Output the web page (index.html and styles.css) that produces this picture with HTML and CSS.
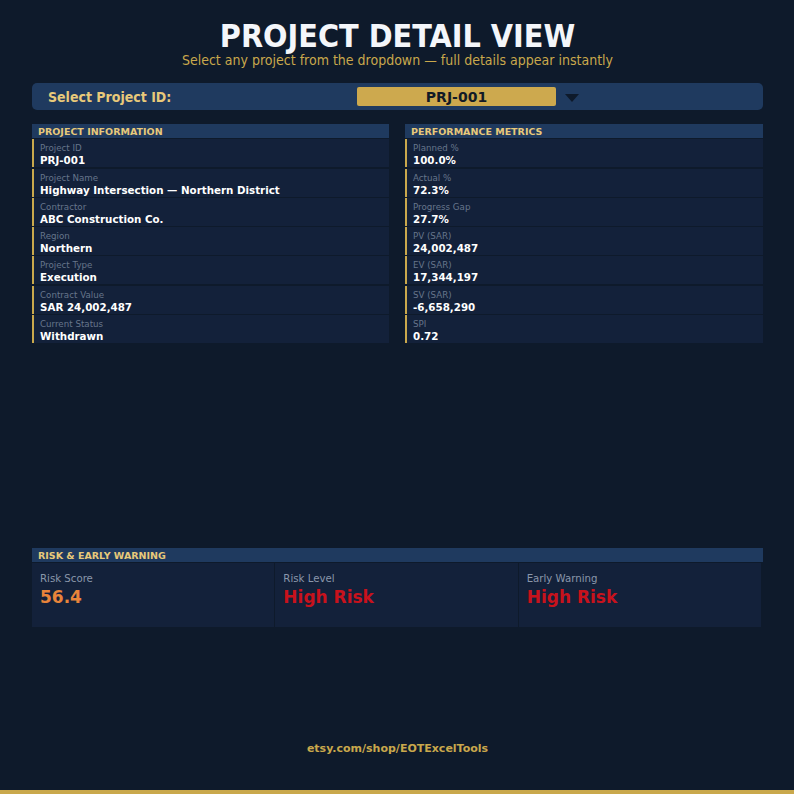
FILE: index.html
```html
<!DOCTYPE html>
<html lang="en">
<head>
    <meta charset="UTF-8">
    <meta name="viewport" content="width=device-width, initial-scale=1.0">
    <title>Project Detail View</title>
    <link rel="stylesheet" href="styles.css">
</head>
<body>
    <div class="page">
        <header class="head">
            <h1>PROJECT DETAIL VIEW</h1>
            <p class="sub">Select any project from the dropdown — full details appear instantly</p>
        </header>

        <!-- project picker -->
        <div class="picker">
            <span class="picker-label">Select Project ID:</span>
            <div class="picker-box">PRJ-001</div>
            <span class="picker-arrow"></span>
        </div>

        <div class="panels">
            <section class="panel">
                <div class="panel-title">PROJECT INFORMATION</div>
                <div class="row"><span class="lbl">Project ID</span><span class="val">PRJ-001</span></div>
                <div class="row"><span class="lbl">Project Name</span><span class="val">Highway Intersection — Northern District</span></div>
                <div class="row"><span class="lbl">Contractor</span><span class="val">ABC Construction Co.</span></div>
                <div class="row"><span class="lbl">Region</span><span class="val">Northern</span></div>
                <div class="row"><span class="lbl">Project Type</span><span class="val">Execution</span></div>
                <div class="row"><span class="lbl">Contract Value</span><span class="val">SAR 24,002,487</span></div>
                <div class="row"><span class="lbl">Current Status</span><span class="val">Withdrawn</span></div>
            </section>
            <section class="panel">
                <div class="panel-title">PERFORMANCE METRICS</div>
                <div class="row"><span class="lbl">Planned %</span><span class="val">100.0%</span></div>
                <div class="row"><span class="lbl">Actual %</span><span class="val">72.3%</span></div>
                <div class="row"><span class="lbl">Progress Gap</span><span class="val">27.7%</span></div>
                <div class="row"><span class="lbl">PV (SAR)</span><span class="val">24,002,487</span></div>
                <div class="row"><span class="lbl">EV (SAR)</span><span class="val">17,344,197</span></div>
                <div class="row"><span class="lbl">SV (SAR)</span><span class="val">-6,658,290</span></div>
                <div class="row"><span class="lbl">SPI</span><span class="val">0.72</span></div>
            </section>
        </div>

        <section class="risk">
            <div class="panel-title">RISK &amp; EARLY WARNING</div>
            <div class="risk-cells">
                <div class="cell"><span class="cell-lbl">Risk Score</span><span class="cell-val score">56.4</span></div>
                <div class="cell"><span class="cell-lbl">Risk Level</span><span class="cell-val danger">High Risk</span></div>
                <div class="cell"><span class="cell-lbl">Early Warning</span><span class="cell-val danger">High Risk</span></div>
            </div>
        </section>

        <footer class="foot">etsy.com/shop/EOTExcelTools</footer>
    </div>
</body>
</html>
```

FILE: styles.css
```css
html, body {
    margin: 0;
    height: 100%;
}

body {
    font-family: 'DejaVu Sans', sans-serif;
    background: #0e1a2b;
    color: #fff;
}

.page {
    height: 794px;
    box-sizing: border-box;
    padding: 21px 31px 0 32px;
    border-bottom: 4px solid #c9a84c;
    display: flex;
    flex-direction: column;
}

.head {
    text-align: center;
}

.head h1 {
    margin: 0;
    font-family: 'DejaVu Sans Condensed', 'DejaVu Sans', sans-serif;
    font-size: 32px;
    font-weight: bold;
    line-height: 31px;
    color: #f4f6fa;
}

.sub {
    margin: 0;
    font-family: 'DejaVu Sans Condensed', 'DejaVu Sans', sans-serif;
    font-size: 14px;
    line-height: 16px;
    color: #c9a84c;
}

.picker {
    margin-top: 15px;
    height: 27px;
    background: #1f3a5f;
    border-radius: 5px;
    display: flex;
    align-items: center;
    padding-left: 16px;
}

.picker-label {
    width: 309px;
    font-family: 'DejaVu Sans Condensed', 'DejaVu Sans', sans-serif;
    font-size: 14px;
    font-weight: bold;
    color: #e8c97a;
}

.picker-box {
    width: 199px;
    height: 19px;
    background: #cda94e;
    border-radius: 2px;
    text-align: center;
    font-size: 14px;
    font-weight: bold;
    line-height: 21px;
    color: #121a26;
}

.picker-arrow {
    margin-left: 9px;
    margin-top: 2px;
    width: 0;
    height: 0;
    border-left: 7px solid transparent;
    border-right: 7px solid transparent;
    border-top: 8px solid #0e1a2b;
}

.panels {
    margin-top: 14px;
    display: grid;
    grid-template-columns: 357px 358px;
    column-gap: 16px;
}

.panel {
    display: flex;
    flex-direction: column;
    gap: 1.3px;
}

.panel-title {
    height: 14px;
    background: #1f3a5f;
    padding-left: 6px;
    font-size: 9.5px;
    font-weight: bold;
    line-height: 15px;
    color: #e8c97a;
}

.row {
    height: 28px;
    box-sizing: border-box;
    background: #13213a;
    border-left: 2px solid #c9a84c;
    padding: 4px 0 0 6px;
    display: flex;
    flex-direction: column;
}

.lbl {
    font-size: 8.7px;
    line-height: 11px;
    color: #66758b;
}

.val {
    font-size: 10.3px;
    font-weight: bold;
    line-height: 13px;
    color: #fff;
}

.risk {
    margin-top: 205px;
    display: flex;
    flex-direction: column;
    gap: 1px;
}

.risk-cells {
    display: grid;
    grid-template-columns: 1fr 1fr 1fr;
    gap: 1px;
    margin-right: 2px;
}

.cell {
    height: 64px;
    box-sizing: border-box;
    background: #13213a;
    padding: 9px 0 0 8px;
    display: flex;
    flex-direction: column;
}

.cell-lbl {
    font-size: 10.2px;
    line-height: 13px;
    color: #8a97aa;
}

.cell-val {
    font-size: 17px;
    font-weight: bold;
    line-height: 24px;
}

.score {
    color: #e8843a;
}

.danger {
    color: #c8121c;
}

.foot {
    margin-top: auto;
    margin-bottom: 35px;
    text-align: center;
    font-size: 11px;
    font-weight: bold;
    color: #c9a84c;
}
```
